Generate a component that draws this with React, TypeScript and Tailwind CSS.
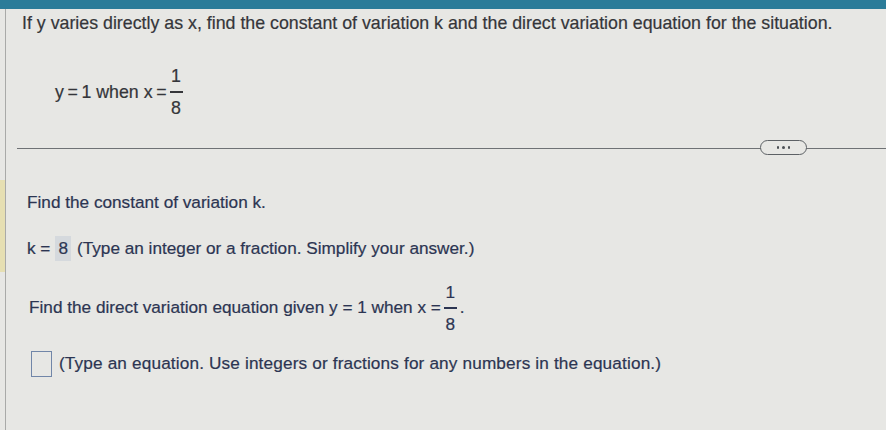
import React from 'react';

const Frac = ({ n, d }: { n: string; d: string }) => (
  <span className="inline-flex flex-col items-center align-middle mx-[3px] leading-none">
    <span className="pb-[6px]">{n}</span>
    <span className="block w-[13px] h-[1.5px] bg-current" />
    <span className="pt-[7px]">{d}</span>
  </span>
);

export default function App() {
  return (
    <div
      className="w-[886px] h-[430px] overflow-hidden flex flex-col bg-[#e7e7e4] text-[17.8px] [-webkit-text-stroke:0.2px]"
      style={{ fontFamily: '"Liberation Sans", Arial, sans-serif' }}
    >
      <div className="h-[9px] bg-[#2b7c99] shrink-0" />
      <div className="flex flex-1">
        <div className="w-[5px] flex flex-col pt-[171px]">
          <div className="h-[92px] bg-[#e6dfb2]" />
        </div>
        <div className="w-[1px] bg-[#a9aaa8]" />
        <div className="flex-1 flex flex-col">
          <p className="pl-[16px] pt-[1px] text-[#35363a]">
            If y varies directly as x, find the constant of variation k and the direct variation equation for the situation.
          </p>
          <div className="pl-[49px] pt-[31px] text-[#35363a] flex items-center">
            <span>y{'\u2009'}={'\u2009'}1 when x{'\u2009'}=</span>
            <Frac n="1" d="8" />
          </div>
          <div className="relative mt-[30px] ml-[11px] h-[1.5px] bg-[#6f7275]">
            <div className="absolute left-[743px] -top-[8px] w-[47px] h-[15px] rounded-full border-[1.5px] border-[#5d6165] bg-[#e7e7e4] flex items-center justify-center gap-[3px] [-webkit-text-stroke:0px]">
              <span className="w-[2.5px] h-[2.5px] rounded-full bg-[#4c5055]" />
              <span className="w-[2.5px] h-[2.5px] rounded-full bg-[#4c5055]" />
              <span className="w-[2.5px] h-[2.5px] rounded-full bg-[#4c5055]" />
            </div>
          </div>
          <div className="pl-[21px] text-[#2c3552] text-[17.2px]">
            <p className="pt-[41px]">Find the constant of variation k.</p>
            <div className="flex items-center mt-[20px]">
              <span>k =</span>
              <span className="ml-[5px] px-[3px] h-[25px] flex items-center bg-[#d5d9dd]">8</span>
              <span className="ml-[6px]">(Type an integer or a fraction. Simplify your answer.)</span>
            </div>
            <div className="flex items-center mt-[22px] pl-[2px]">
              <span>Find the direct variation equation given y = 1 when x =</span>
              <Frac n="1" d="8" />
              <span>.</span>
            </div>
            <div className="flex items-center mt-[18px]">
              <span className="ml-[4px] w-[21px] h-[26px] border-[1.5px] border-[#7186a8] [-webkit-text-stroke:0px]" />
              <span className="ml-[7px] tracking-[0.15px]">(Type an equation. Use integers or fractions for any numbers in the equation.)</span>
            </div>
          </div>
        </div>
      </div>
    </div>
  );
}
